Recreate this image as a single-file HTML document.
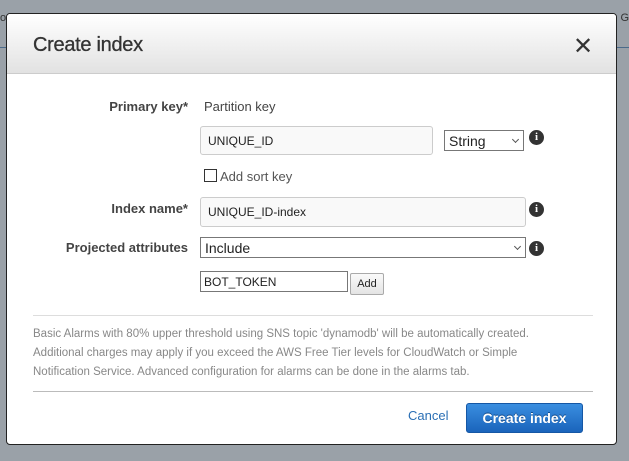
<!DOCTYPE html>
<html><head><style>
*{box-sizing:border-box;margin:0;padding:0}
body{width:629px;height:461px;background:#9aa1a8;font-family:"Liberation Sans",sans-serif;position:relative;overflow:hidden}
.a{position:absolute}
.modal{left:6px;top:13px;width:611px;height:432px;background:#fff;border:1px solid #222;border-radius:4px;overflow:hidden}
.hdr{left:0;top:0;width:100%;height:60px;background:linear-gradient(#fff,#e2e2e2);border-bottom:1px solid #ccc}
.lbl{font-size:13px;font-weight:bold;color:#444;text-align:right;width:181px;left:0}
.inp{background:#f9f9f9;border:1px solid #ccc;border-radius:3px;font-size:12px;color:#222;padding-left:7px;display:flex;align-items:center}
.sel{border:1px solid #777;background:#fff;font-size:14px;color:#222;padding-left:4px;display:flex;align-items:center}
.chev{position:absolute;right:5px;top:6px;width:5px;height:5px;border-right:1px solid #555;border-bottom:1px solid #555;transform:rotate(45deg)}
.info{width:15px;height:15px;border-radius:50%;background:#333;color:#fff;font-size:11px;font-weight:bold;font-family:"Liberation Serif",serif;text-align:center;line-height:15px}
.note{left:26px;font-size:11.5px;color:#888}
</style></head><body>
<div class="a" style="left:0;top:12px;font-size:11px;color:#333">o</div>
<div class="a" style="right:0;top:12px;font-size:11px;color:#333">G</div>
<div class="a" style="left:0;top:47px;width:629px;height:1px;background:#4a6a8a"></div>
<div class="a modal">
 <div class="a hdr"></div>
 <div class="a" style="left:26px;top:20px;font-size:20px;color:#333;letter-spacing:-0.3px;-webkit-text-stroke:0.3px #333">Create index</div>
 <div class="a" style="left:566px;top:18px;font-size:24px;color:#333">✕</div>
 <div class="a lbl" style="top:85px">Primary key*</div>
 <div class="a" style="left:197px;top:85px;font-size:13px;color:#444">Partition key</div>
 <div class="a inp" style="left:193px;top:112px;width:233px;height:29px">UNIQUE_ID</div>
 <div class="a sel" style="left:437px;top:116px;width:80px;height:21px">String<span class="chev"></span></div>
 <div class="a info" style="left:522px;top:116px">i</div>
 <div class="a" style="left:197px;top:155px;width:13px;height:13px;border:1px solid #333"></div>
 <div class="a" style="left:213px;top:155px;font-size:13px;color:#555">Add sort key</div>
 <div class="a lbl" style="top:187px">Index name*</div>
 <div class="a inp" style="left:193px;top:183px;width:326px;height:30px">UNIQUE_ID-index</div>
 <div class="a info" style="left:522px;top:188px">i</div>
 <div class="a lbl" style="top:226px">Projected attributes</div>
 <div class="a sel" style="left:193px;top:223px;width:326px;height:21px">Include<span class="chev"></span></div>
 <div class="a info" style="left:522px;top:227px">i</div>
 <div class="a" style="left:193px;top:257px;width:148px;height:21px;border:1px solid #777;font-size:12px;color:#222;padding:3px 3px">BOT_TOKEN</div>
 <div class="a" style="left:343px;top:259px;width:34px;height:22px;border:1px solid #aaa;border-radius:2px;background:linear-gradient(#fafafa,#e4e4e4);font-size:11px;color:#222;text-align:center;line-height:20px">Add</div>
 <div class="a" style="left:26px;top:301px;width:560px;height:1px;background:#ddd"></div>
 <div class="a note" style="top:314px">Basic Alarms with 80% upper threshold using SNS topic 'dynamodb' will be automatically created.</div>
 <div class="a note" style="top:333px">Additional charges may apply if you exceed the AWS Free Tier levels for CloudWatch or Simple</div>
 <div class="a note" style="top:352px">Notification Service. Advanced configuration for alarms can be done in the alarms tab.</div>
 <div class="a" style="left:26px;top:377px;width:560px;height:1px;background:#bbb"></div>
 <div class="a" style="left:401px;top:394px;font-size:13px;color:#2a6fb5">Cancel</div>
 <div class="a" style="left:459px;top:389px;width:117px;height:30px;border-radius:3px;background:linear-gradient(#3a8ee0,#1a64bb);border:1px solid #1557a5;color:#fff;font-size:14px;font-weight:bold;text-align:center;line-height:28px;text-shadow:0 -1px 0 #124a8a">Create index</div>
</div>
</body></html>
